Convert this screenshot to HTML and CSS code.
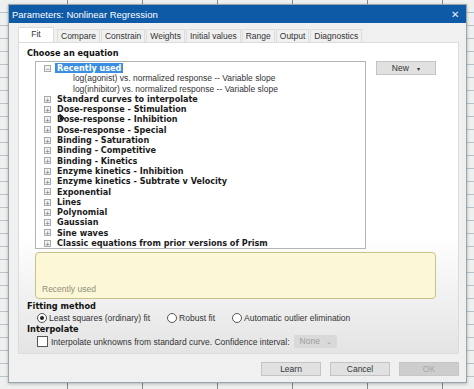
FILE: index.html
```html
<!DOCTYPE html>
<html lang="en">
<head>
  <meta charset="UTF-8" />
  <title>Parameters: Nonlinear Regression</title>
  <link rel="stylesheet" href="styles.css">
</head>
<body>
  <div class="window">
    <div class="titlebar">
      <span>Parameters: Nonlinear Regression</span>
      <span class="close">&#x2715;</span>
    </div>

    <div class="content">
      <!-- Tabs -->
      <div class="tabs">
        <div class="tab active">Fit</div>
        <div class="tab">Compare</div>
        <div class="tab">Constrain</div>
        <div class="tab">Weights</div>
        <div class="tab">Initial values</div>
        <div class="tab">Range</div>
        <div class="tab">Output</div>
        <div class="tab">Diagnostics</div>
      </div>

      <div class="panel">
        <div class="heading">Choose an equation</div>

        <div class="equation-row">
          <div class="tree">
            <div class="node top"><span class="toggle">&minus;</span><span class="label selected">Recently used</span></div>
            <div class="leaf">log(agonist) vs. normalized response -- Variable slope</div>
            <div class="leaf">log(inhibitor) vs. normalized response -- Variable slope</div>
            <div class="node"><span class="toggle">+</span><span class="label">Standard curves to interpolate</span></div>
            <div class="node"><span class="toggle">+</span><span class="label">Dose-response - Stimulation</span></div>
            <div class="node"><span class="toggle">+</span><span class="label">Dose-response - Inhibition</span><span class="cursor"></span></div>
            <div class="node"><span class="toggle">+</span><span class="label">Dose-response - Special</span></div>
            <div class="node"><span class="toggle">+</span><span class="label">Binding - Saturation</span></div>
            <div class="node"><span class="toggle">+</span><span class="label">Binding - Competitive</span></div>
            <div class="node"><span class="toggle">+</span><span class="label">Binding - Kinetics</span></div>
            <div class="node"><span class="toggle">+</span><span class="label">Enzyme kinetics - Inhibition</span></div>
            <div class="node"><span class="toggle">+</span><span class="label">Enzyme kinetics - Subtrate v Velocity</span></div>
            <div class="node"><span class="toggle">+</span><span class="label">Exponential</span></div>
            <div class="node"><span class="toggle">+</span><span class="label">Lines</span></div>
            <div class="node"><span class="toggle">+</span><span class="label">Polynomial</span></div>
            <div class="node"><span class="toggle">+</span><span class="label">Gaussian</span></div>
            <div class="node"><span class="toggle">+</span><span class="label">Sine waves</span></div>
            <div class="node"><span class="toggle">+</span><span class="label">Classic equations from prior versions of Prism</span></div>
          </div>
          <button class="btn new">New <span class="caret">&#9662;</span></button>
        </div>

        <div class="description">Recently used</div>

        <div class="heading">Fitting method</div>
        <div class="options">
          <label class="radio"><span class="dot checked"></span>Least squares (ordinary) fit</label>
          <label class="radio"><span class="dot"></span>Robust fit</label>
          <label class="radio"><span class="dot"></span>Automatic outlier elimination</label>
        </div>

        <div class="heading">Interpolate</div>
        <div class="options interp">
          <span class="check"></span>
          <span>Interpolate unknowns from standard curve. Confidence interval:</span>
          <span class="select">None <span class="select-caret">&#8964;</span></span>
        </div>
      </div>

      <div class="actions">
        <button class="btn">Learn</button>
        <button class="btn">Cancel</button>
        <button class="btn disabled">OK</button>
      </div>
    </div>
  </div>
</body>
</html>
```

FILE: styles.css
```css
body {
  margin: 0;
  width: 474px;
  height: 389px;
  overflow: hidden;
  font-family: 'Liberation Sans', Arial, sans-serif;
  font-size: 8.5px;
  color: #222;
  background-color: #eef0f0;
  background-image:
    repeating-linear-gradient(to right, transparent 0 67px, #7e8a90 67px 68px, transparent 68px 75px),
    repeating-linear-gradient(to bottom, transparent 0 12px, #b9c4c8 12px 13px);
}

.window {
  margin: 4px 0 0 8px;
  width: 457px;
  height: 377px;
  background: #f0f0f0;
  border: 1px solid #9aa6ae;
  box-shadow: 0 1px 3px rgba(0, 0, 0, 0.25);
  display: flex;
  flex-direction: column;
}

.titlebar {
  height: 18px;
  background: #0f5aa6;
  color: #fff;
  font-size: 9.5px;
  display: flex;
  align-items: center;
  justify-content: space-between;
  padding: 0 7px 0 3px;
}

.close {
  font-size: 10px;
  color: #e8eef6;
}

.content {
  flex: 1;
  padding: 5px 7px 0 9px;
  display: flex;
  flex-direction: column;
}

/* Tabs */
.tabs {
  display: flex;
  height: 14px;
  align-items: flex-end;
}

.tab {
  height: 12px;
  line-height: 12px;
  padding: 0 3px;
  margin-right: 1px;
  color: #333;
  background: #f0f0f0;
  border: 1px solid #dcdcdc;
  border-bottom: none;
}

.tab.active {
  height: 14px;
  line-height: 12px;
  width: 28px;
  text-align: center;
  background: #fff;
  margin-right: 3px;
}

.panel {
  height: 305px;
  background: linear-gradient(to bottom, #fff 0%, #fff 62%, #e4e4e4 100%);
  border: 1px solid #dcdcdc;
  padding: 5px 0 0 8px;
}

.heading {
  font-family: 'DejaVu Sans', Verdana, sans-serif;
  font-weight: bold;
  font-size: 8.2px;
  color: #111;
  height: 11px;
  line-height: 11px;
}

.equation-row {
  display: flex;
  align-items: flex-start;
  margin: 2px 0 0 8px;
}

.tree {
  width: 329px;
  height: 185px;
  border: 1px solid #b4b4b4;
  background: #fff;
  padding-top: 1px;
}

.node, .leaf {
  height: 10.3px;
  line-height: 10.3px;
  white-space: nowrap;
  display: flex;
  align-items: center;
  position: relative;
}

.node .label {
  font-family: 'DejaVu Sans', Verdana, sans-serif;
  font-weight: bold;
  font-size: 8.1px;
  color: #1a1a1a;
  padding: 0 2px;
}

.label.selected {
  background: #3c8fe0;
  color: #fff;
}

.leaf {
  padding-left: 37px;
  color: #333;
}

.toggle {
  width: 5px;
  height: 5px;
  margin: 0 4px 0 8px;
  border: 1px solid #a8a8a8;
  background: #f4f4f4;
  color: #666;
  font-size: 6px;
  line-height: 5px;
  text-align: center;
  font-family: 'DejaVu Sans', sans-serif;
}

.cursor {
  position: absolute;
  left: 22px;
  top: -1px;
  width: 0;
  height: 0;
  border-left: 3px solid transparent;
  border-right: 3px solid transparent;
  border-bottom: 7px solid #222;
  transform: rotate(-25deg);
}

.btn {
  font-family: 'Liberation Sans', Arial, sans-serif;
  font-size: 8.5px;
  color: #333;
  background: #e1e1e1;
  border: 1px solid #c4c4c4;
  height: 14px;
  width: 60px;
  padding: 0;
}

.btn.new {
  margin-left: 10px;
  text-align: center;
}

.caret {
  font-size: 6px;
  margin-left: 6px;
}

.description {
  margin: 3px 0 2px 8px;
  width: 387px;
  height: 41px;
  background: #fcf7d6;
  border: 1px solid #c9c08a;
  border-radius: 4px;
  padding: 0 6px 4px;
  display: flex;
  align-items: flex-end;
  color: #8f8f80;
}

.options {
  display: flex;
  align-items: center;
  height: 12px;
  margin-left: 10px;
  color: #333;
}

.radio {
  display: flex;
  align-items: center;
  margin-right: 17px;
}

.dot {
  width: 8px;
  height: 8px;
  border: 1px solid #555;
  border-radius: 50%;
  margin-right: 2px;
  background: #fff;
  position: relative;
}

.dot.checked::after {
  content: "";
  position: absolute;
  left: 2px;
  top: 2px;
  width: 4px;
  height: 4px;
  border-radius: 50%;
  background: #222;
}

.interp {
  height: 13px;
}

.check {
  width: 9px;
  height: 9px;
  border: 1px solid #555;
  background: #fff;
  margin-right: 3px;
}

.select {
  margin-left: 4px;
  width: 37px;
  height: 13px;
  line-height: 13px;
  background: #d9d9d9;
  color: #9c9c9c;
  padding-left: 6px;
}

.select-caret {
  margin-left: 4px;
  font-size: 7px;
}

.actions {
  display: flex;
  justify-content: flex-end;
  gap: 9px;
  margin-top: 8px;
}

.btn.disabled {
  background: #cdcdcd;
  border-color: #c6c6c6;
  color: #a8a8a8;
}
```
